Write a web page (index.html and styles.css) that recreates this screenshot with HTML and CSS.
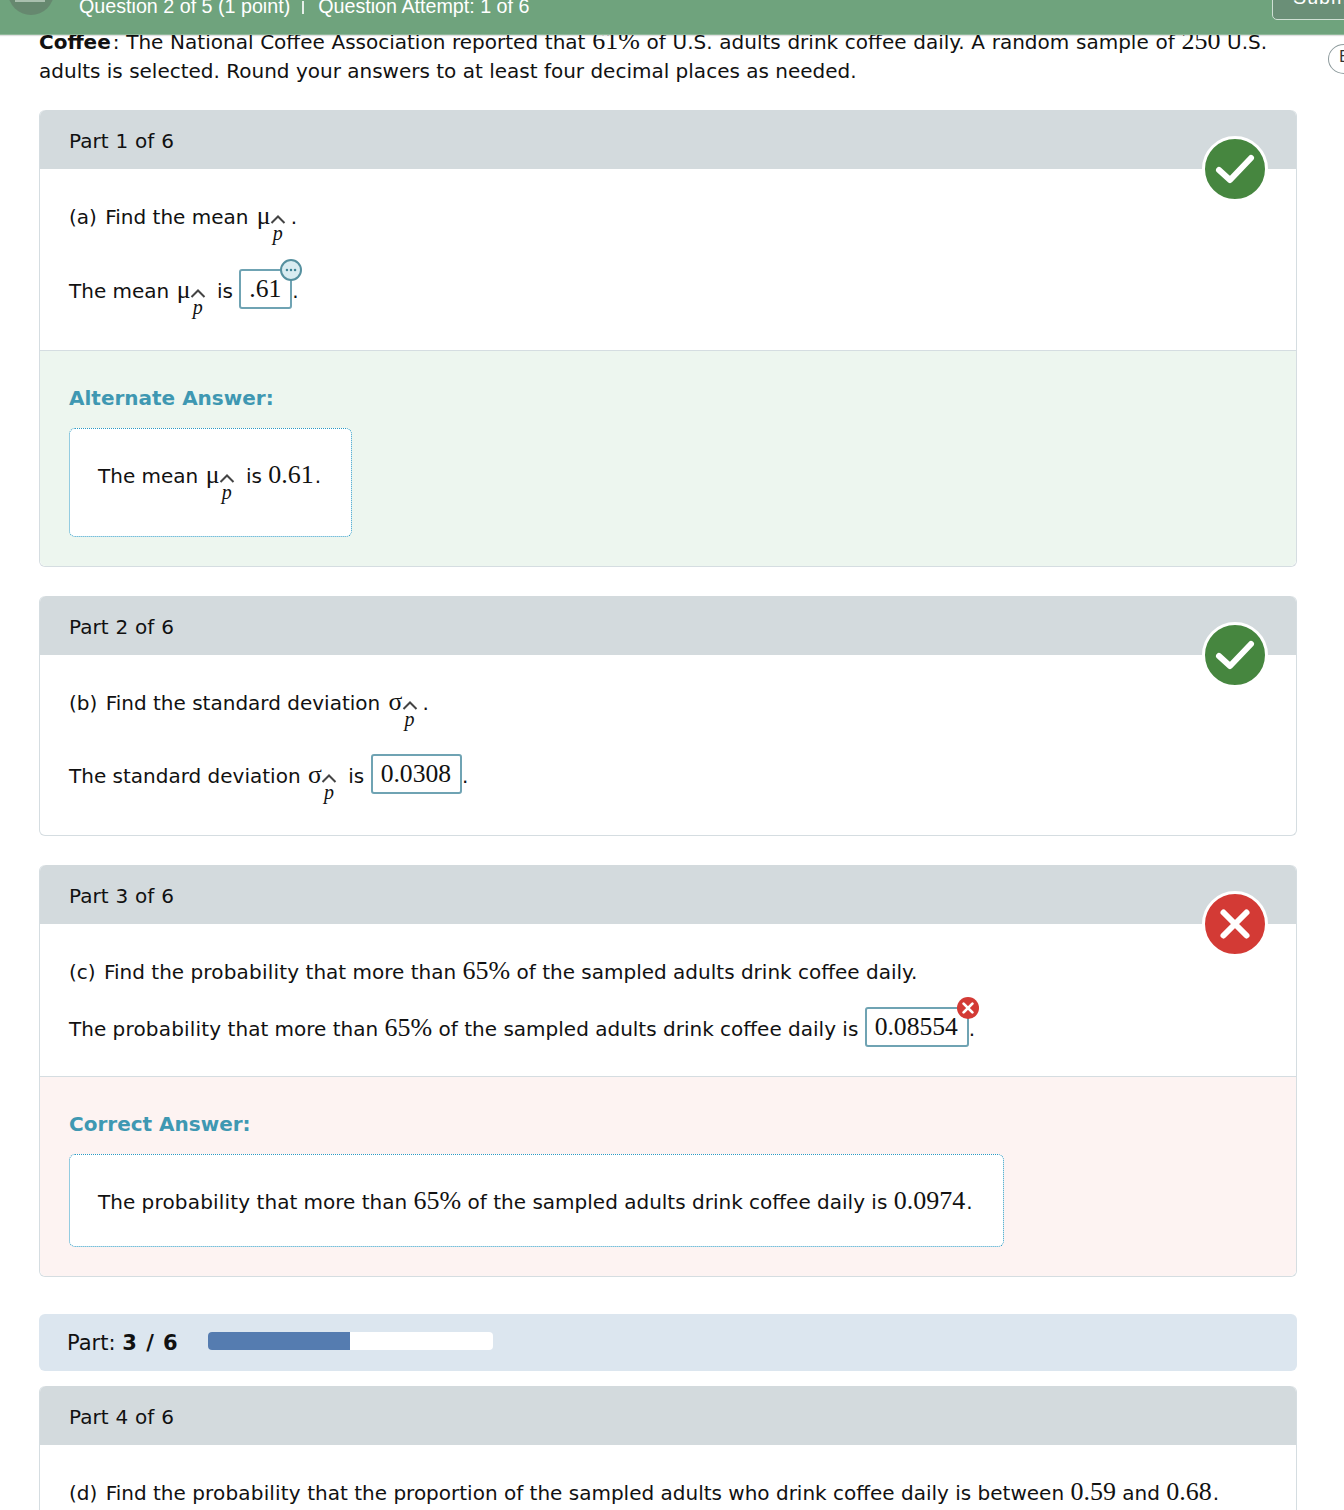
FILE: index.html
```html
<!DOCTYPE html>
<html lang="en">
<head>
<meta charset="utf-8">
<title>Coffee question</title>
<link rel="stylesheet" href="styles.css">
</head>
<body>
<header class="topbar">
  <span class="menu-dot"></span>
  <div class="topbar-text"><span>Question 2 of 5 (1 point)</span><span class="sep"></span><span>Question Attempt: 1 of 6</span></div>
  <span class="submit-btn">Submit</span>
</header>
<span class="side-btn">E</span>
<main class="page">
  <p class="intro"><b class="lead">Coffee</b>: The National Coffee Association reported that <span class="m">61%</span> of U.S. adults drink coffee daily. A random sample of <span class="m">250</span> U.S. adults is selected. Round your answers to at least four decimal places as needed.</p>

  <section class="card">
    <h2 class="card-head">Part 1 of 6</h2>
    <span class="status ok"><svg viewBox="0 0 60 60"><path d="M14 31l11 10 21-22" /></svg></span>
    <div class="card-body">
      <p class="row"><span class="lbl">(a)</span> Find the mean <span class="stat"><i>μ</i><svg class="hat" viewBox="0 0 16 9"><path d="M1.5 8L8 1.5 14.5 8"/></svg><em>p</em></span>.</p>
      <p class="row row-second">The mean <span class="stat"><i>μ</i><svg class="hat" viewBox="0 0 16 9"><path d="M1.5 8L8 1.5 14.5 8"/></svg><em>p</em></span> is <span class="answer">.61<span class="badge info"><svg viewBox="0 0 20 20"><circle cx="5.500" cy="10" r="1.400"/><circle cx="10" cy="10" r="1.400"/><circle cx="14.500" cy="10" r="1.400"/></svg></span></span>.</p>
    </div>
    <div class="feedback good">
      <h3 class="fb-title">Alternate Answer:</h3>
      <div class="fb-box">The mean <span class="stat"><i>μ</i><svg class="hat" viewBox="0 0 16 9"><path d="M1.5 8L8 1.5 14.5 8"/></svg><em>p</em></span> is <span class="m end">0.61</span>.</div>
    </div>
  </section>

  <section class="card">
    <h2 class="card-head">Part 2 of 6</h2>
    <span class="status ok"><svg viewBox="0 0 60 60"><path d="M14 31l11 10 21-22" /></svg></span>
    <div class="card-body">
      <p class="row"><span class="lbl">(b)</span> Find the standard deviation <span class="stat"><i>σ</i><svg class="hat" viewBox="0 0 16 9"><path d="M1.5 8L8 1.5 14.5 8"/></svg><em>p</em></span>.</p>
      <p class="row row-tight">The standard deviation <span class="stat"><i>σ</i><svg class="hat" viewBox="0 0 16 9"><path d="M1.5 8L8 1.5 14.5 8"/></svg><em>p</em></span> is <span class="answer">0.0308</span>.</p>
    </div>
  </section>

  <section class="card">
    <h2 class="card-head">Part 3 of 6</h2>
    <span class="status bad"><svg viewBox="0 0 60 60"><path d="M18.500 18.500l23 23M41.500 18.500l-23 23" /></svg></span>
    <div class="card-body compact">
      <p class="row"><span class="lbl">(c)</span> Find the <span class="wide">probability</span> that more than <span class="m">65%</span> of the sampled adults drink coffee daily.</p>
      <p class="row row-third">The <span class="wide">probability</span> that more than <span class="m">65%</span> of the sampled adults drink coffee daily is <span class="answer">0.08554<span class="badge wrong"><svg viewBox="0 0 20 20"><path d="M6 6l8 8M14 6l-8 8"/></svg></span></span>.</p>
    </div>
    <div class="feedback poor">
      <h3 class="fb-title">Correct Answer:</h3>
      <div class="fb-box slim">The <span class="wide">probability</span> that more than <span class="m">65%</span> of the sampled adults drink coffee daily is <span class="m end">0.0974</span>.</div>
    </div>
  </section>

  <div class="progress">
    <span class="progress-label">Part: <b>3 / 6</b></span>
    <span class="track"><span class="fill"></span></span>
  </div>

  <section class="card last">
    <h2 class="card-head">Part 4 of 6</h2>
    <div class="card-body">
      <p class="row"><span class="lbl">(d)</span> Find the <span class="wide">probability</span> that the proportion of the sampled adults who drink coffee daily is between <span class="m">0.59</span> and <span class="m end">0.68</span>.</p>
    </div>
  </section>
</main>
</body>
</html>
```
FILE: styles.css
```css
* { box-sizing: border-box; }
html, body { margin: 0; height: 1510px; overflow: hidden; background: #fff; }
body { font-family: "DejaVu Sans", Verdana, sans-serif; font-size: 20px; color: #111; position: relative; }
p, h2, h3 { margin: 0; font-weight: 400; }

.topbar { position: relative; z-index: 2; height: 35px; margin-bottom: -7px; background: #6fa37d; border-bottom: 1px solid #8fb89a; box-shadow: 0 1px 1px rgba(0,0,0,.12); color: #fff; font-family: "Liberation Sans", Arial, sans-serif; font-size: 19.700px; overflow: hidden; }
.topbar-text { display: flex; align-items: center; height: 12px; margin-left: 79px; white-space: nowrap; }
.sep { width: 2px; height: 13px; margin: 2px 14px 0 12px; background: #e5efe8; }
.menu-dot { position: absolute; left: 8px; top: -31px; width: 46px; height: 46px; border-radius: 50%; background: #66886f; }
.menu-dot::after { content: ""; position: absolute; left: 7px; bottom: 13px; width: 30px; height: 2px; background: #a9bfae; }
.submit-btn { position: absolute; left: 1272px; top: -20px; width: 100px; height: 40px; padding: 5px 0 0 20px; border: 1px solid #cfe0d4; border-radius: 5px; background: #6a8f77; letter-spacing: 1px; }
.side-btn { position: absolute; left: 1328px; top: 44px; width: 32px; height: 30px; padding: 3px 0 0 10px; border: 1px solid #8d9a9c; border-radius: 50%; font-size: 15px; color: #333; }

.page { padding: 0 47px 0 39px; }
.intro { line-height: 29px; padding-right: 20px; margin-bottom: 24px; }
.intro::first-line { word-spacing: .35px; }
.lead { margin-right: 2px; }
.m { font-family: "Liberation Serif", "Times New Roman", serif; font-size: 26px; line-height: 20px; }
.m.end { margin-right: 1px; }
.lbl { margin-right: 2px; }
.wide { letter-spacing: .18px; }

.card { position: relative; margin-bottom: 29px; border: 1px solid #d5dde1; border-top: 0; border-radius: 6px; background: #fff; }
.card.last { margin-bottom: 0; }
.card-head { height: 59px; padding: 0 29px; font-size: 20px; word-spacing: .6px; line-height: 62px; background: #d3dadd; border-radius: 6px 6px 0 0; }
.card-body { padding: 34px 29px 41px; }
.card-body.compact { padding-bottom: 29px; }
.row { line-height: 29px; white-space: nowrap; }
.row:first-child .stat { margin-left: 2px; }
.row-second { margin-top: 37px; }
.row-tight { margin-top: 36px; margin-bottom: 0; }
.row-third { margin-top: 20px; }

.stat { position: relative; display: inline-block; width: 34px; height: 20px; margin-left: 1px; font-family: "Liberation Serif", serif; line-height: 20px; }
.stat i { font-style: normal; font-size: 25.600px; }
.stat .hat { position: absolute; left: 13px; top: 9px; width: 16px; height: 9px; fill: none; stroke: #444; stroke-width: 2; }
.stat em { position: absolute; left: 16px; top: 17px; font-size: 20px; font-style: italic; }

.answer { position: relative; display: inline-block; height: 40px; padding: 0 9px 0 8px; border: 2px solid #6fa3b3; border-radius: 3px; font-family: "Liberation Serif", serif; font-size: 25.600px; line-height: 35px; vertical-align: 1px; }
.badge { position: absolute; right: -12px; top: -12px; width: 22px; height: 22px; border-radius: 50%; display: block; }
.badge svg { display: block; width: 100%; height: 100%; }
.badge.info { background: #d9ecf1; border: 2px solid #55909f; }
.badge.info svg { fill: #3f8496; }
.badge.wrong { background: #d33a35; }
.badge.wrong svg { fill: none; stroke: #fff; stroke-width: 2.500; stroke-linecap: round; }

.status { position: absolute; right: 28px; top: 26px; width: 66px; height: 66px; border: 3px solid #fff; border-radius: 50%; }
.status svg { display: block; width: 100%; height: 100%; fill: none; stroke: #fff; stroke-width: 6; stroke-linecap: round; stroke-linejoin: round; }
.status.ok { background: #46863f; }
.status.bad { background: #d33a35; }

.feedback { padding: 33px 29px 29px; border-top: 1px solid #d5dde1; border-radius: 0 0 6px 6px; }
.feedback.good { background: #edf6ef; }
.feedback.poor { background: #fdf3f2; }
.fb-title { font-size: 20px; font-weight: 700; line-height: 29px; color: #3f98b2; }
.fb-box { display: inline-block; width: 283px; height: 109px; margin-top: 15px; padding: 33px 0 0 28px; border: 1px dotted #2a9ac4; border-radius: 6px; background: #fff; line-height: 29px; white-space: nowrap; }
.fb-box.slim { width: 935px; height: 93px; }

.progress { display: flex; align-items: center; height: 57px; margin: 37px 0 15px; padding: 0 0 0 28px; border-radius: 6px; background: #dce6ef; }
.progress-label { width: 141px; font-size: 21px; }
.progress-label b { letter-spacing: 1px; }
.track { display: block; width: 285px; height: 18px; margin-top: -3px; border-radius: 4px; background: #fff; overflow: hidden; }
.fill { display: block; width: 142px; height: 100%; background: #557cb0; }
```
